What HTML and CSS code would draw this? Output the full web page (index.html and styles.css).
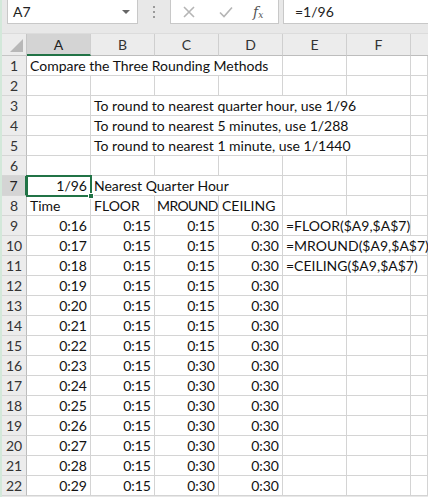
FILE: index.html
```html
<!DOCTYPE html>
<html>
<head>
<meta charset="utf-8">
<link rel="stylesheet" href="styles.css">
</head>
<body>
<div class="app">
  <div class="toolbar">
    <div class="namebox"><span>A7</span><span class="arrow"></span></div>
    <div class="dots"><i></i><i></i><i></i></div>
    <div class="fbuttons">
      <svg class="ic-x" width="12" height="12" viewBox="0 0 12 12"><path d="M1 1 L11 11 M11 1 L1 11" stroke="#b5b5b5" stroke-width="1.6" fill="none"/></svg>
      <svg class="ic-ok" width="14" height="12" viewBox="0 0 14 12"><path d="M1 6.5 L5 10.5 L13 1.5" stroke="#b5b5b5" stroke-width="1.6" fill="none"/></svg>
      <span class="fx">f<sub>x</sub></span>
    </div>
    <div class="fbar">=1/96</div>
  </div>
  <div class="sheet">
    <div class="row head">
      <div class="corner"><svg width="13" height="13" viewBox="0 0 13 13"><path d="M13 0 L13 13 L0 13 Z" fill="#b8b8b8"/></svg></div>
      <div class="ch sel">A</div><div class="ch">B</div><div class="ch">C</div><div class="ch">D</div><div class="ch">E</div><div class="ch">F</div><div class="ch last"></div>
    </div>
    <div class="row"><div class="rh">1</div><div class="c s4">Compare the Three Rounding Methods</div><div class="c"></div><div class="c"></div><div class="c"></div></div>
    <div class="row"><div class="rh">2</div><div class="c"></div><div class="c"></div><div class="c"></div><div class="c"></div><div class="c"></div><div class="c"></div><div class="c"></div></div>
    <div class="row"><div class="rh">3</div><div class="c"></div><div class="c s5">To round to nearest quarter hour, use 1/96</div><div class="c"></div></div>
    <div class="row"><div class="rh">4</div><div class="c"></div><div class="c s5">To round to nearest 5 minutes, use 1/288</div><div class="c"></div></div>
    <div class="row"><div class="rh">5</div><div class="c"></div><div class="c s5">To round to nearest 1 minute, use 1/1440</div><div class="c"></div></div>
    <div class="row"><div class="rh">6</div><div class="c"></div><div class="c"></div><div class="c"></div><div class="c"></div><div class="c"></div><div class="c"></div><div class="c"></div></div>
    <div class="row"><div class="rh sel">7</div><div class="c r active">1/96<span class="handle"></span></div><div class="c s3">Nearest Quarter Hour</div><div class="c"></div><div class="c"></div><div class="c"></div></div>
    <div class="row"><div class="rh">8</div><div class="c">Time</div><div class="c">FLOOR</div><div class="c tight">MROUND</div><div class="c">CEILING</div><div class="c"></div><div class="c"></div><div class="c"></div></div>
    <div class="row"><div class="rh">9</div><div class="c r">0:16</div><div class="c r">0:15</div><div class="c r">0:15</div><div class="c r">0:30</div><div class="c s2">=FLOOR($A9,$A$7)</div><div class="c"></div></div>
    <div class="row"><div class="rh">10</div><div class="c r">0:17</div><div class="c r">0:15</div><div class="c r">0:15</div><div class="c r">0:30</div><div class="c s3">=MROUND($A9,$A$7)</div></div>
    <div class="row"><div class="rh">11</div><div class="c r">0:18</div><div class="c r">0:15</div><div class="c r">0:15</div><div class="c r">0:30</div><div class="c s2">=CEILING($A9,$A$7)</div><div class="c"></div></div>
    <div class="row"><div class="rh">12</div><div class="c r">0:19</div><div class="c r">0:15</div><div class="c r">0:15</div><div class="c r">0:30</div><div class="c"></div><div class="c"></div><div class="c"></div></div>
    <div class="row"><div class="rh">13</div><div class="c r">0:20</div><div class="c r">0:15</div><div class="c r">0:15</div><div class="c r">0:30</div><div class="c"></div><div class="c"></div><div class="c"></div></div>
    <div class="row"><div class="rh">14</div><div class="c r">0:21</div><div class="c r">0:15</div><div class="c r">0:15</div><div class="c r">0:30</div><div class="c"></div><div class="c"></div><div class="c"></div></div>
    <div class="row"><div class="rh">15</div><div class="c r">0:22</div><div class="c r">0:15</div><div class="c r">0:15</div><div class="c r">0:30</div><div class="c"></div><div class="c"></div><div class="c"></div></div>
    <div class="row"><div class="rh">16</div><div class="c r">0:23</div><div class="c r">0:15</div><div class="c r">0:30</div><div class="c r">0:30</div><div class="c"></div><div class="c"></div><div class="c"></div></div>
    <div class="row"><div class="rh">17</div><div class="c r">0:24</div><div class="c r">0:15</div><div class="c r">0:30</div><div class="c r">0:30</div><div class="c"></div><div class="c"></div><div class="c"></div></div>
    <div class="row"><div class="rh">18</div><div class="c r">0:25</div><div class="c r">0:15</div><div class="c r">0:30</div><div class="c r">0:30</div><div class="c"></div><div class="c"></div><div class="c"></div></div>
    <div class="row"><div class="rh">19</div><div class="c r">0:26</div><div class="c r">0:15</div><div class="c r">0:30</div><div class="c r">0:30</div><div class="c"></div><div class="c"></div><div class="c"></div></div>
    <div class="row"><div class="rh">20</div><div class="c r">0:27</div><div class="c r">0:15</div><div class="c r">0:30</div><div class="c r">0:30</div><div class="c"></div><div class="c"></div><div class="c"></div></div>
    <div class="row"><div class="rh">21</div><div class="c r">0:28</div><div class="c r">0:15</div><div class="c r">0:30</div><div class="c r">0:30</div><div class="c"></div><div class="c"></div><div class="c"></div></div>
    <div class="row"><div class="rh">22</div><div class="c r">0:29</div><div class="c r">0:15</div><div class="c r">0:30</div><div class="c r">0:30</div><div class="c"></div><div class="c"></div><div class="c"></div></div>
  </div>
</div>
</body>
</html>
```

FILE: styles.css
```css
* { box-sizing: border-box; }
html, body { margin: 0; padding: 0; background: #ffffff; }
body { font-family: Lato, "Open Sans", sans-serif; color: #111; }
.app {
  width: 428px;
  height: 497px;
  overflow: hidden;
  border-left: 2px solid #d3e8da;
  background: #e8e8e8;
}
.toolbar {
  height: 33px;
  display: flex;
  align-items: flex-start;
  background: #e8e8e8;
  padding-left: 5px;
}
.namebox {
  width: 131px;
  height: 24px;
  background: #fff;
  border: 1px solid #c8c8c8;
  border-top: none;
  display: flex;
  align-items: center;
  justify-content: space-between;
  padding: 0 7px 0 5px;
  font-size: 14px;
  color: #222;
}
.arrow {
  width: 0; height: 0;
  border-left: 4px solid transparent;
  border-right: 4px solid transparent;
  border-top: 4px solid #666;
}
.dots {
  width: 32px;
  height: 24px;
  display: flex;
  flex-direction: column;
  align-items: center;
  justify-content: center;
  gap: 3px;
}
.dots i { display: block; width: 2px; height: 2px; background: #9a9a9a; }
.fbuttons {
  width: 109px;
  height: 24px;
  background: #fff;
  border: 1px solid #c8c8c8;
  border-top: none;
  display: flex;
  align-items: center;
  padding-left: 12px;
}
.ic-x { margin-right: 24px; }
.ic-ok { margin-right: 20px; }
.fx {
  font-family: "DejaVu Serif", "Liberation Serif", serif;
  font-style: italic;
  font-size: 14px;
  color: #555;
}
.fx sub { font-size: 9px; vertical-align: -1px; }
.fbar {
  flex: 1;
  margin-left: 4px;
  height: 24px;
  background: #fff;
  border: 1px solid #c8c8c8;
  border-top: none;
  border-right: none;
  font-size: 14px;
  color: #222;
  display: flex;
  align-items: center;
  padding-left: 11px;
}
.sheet { background: #fff; }
.row {
  display: grid;
  grid-template-columns: 25px repeat(6, 64px) 1fr;
  height: 20px;
}
.row.head {
  height: 23px;
  background: #ececec;
  border-top: 1px solid #dcdcdc;
}
.corner {
  display: flex;
  align-items: flex-end;
  justify-content: flex-end;
  padding: 0 3px 3px 0;
  border-right: 1px solid #c6c6c6;
  border-bottom: 1px solid #c6c6c6;
}
.corner svg { display: block; }
.ch {
  border-right: 1px solid #cfcfcf;
  border-bottom: 1px solid #bdbdbd;
  font-size: 14px;
  color: #333;
  display: flex;
  align-items: center;
  justify-content: center;
}
.ch.sel { background: #d4d4d4; border-bottom: 2px solid #217346; color: #222; }
.ch.last { border-right: none; }
.rh {
  background: #ececec;
  border-right: 1px solid #bdbdbd;
  border-bottom: 1px solid #d6d6d6;
  font-size: 14px;
  color: #333;
  display: flex;
  align-items: center;
  justify-content: center;
}
.rh.sel { background: #d4d4d4; border-right: 2px solid #217346; color: #222; }
.c {
  border-right: 1px solid #d4d4d4;
  border-bottom: 1px solid #d4d4d4;
  font-size: 14px;
  line-height: 19px;
  padding: 0 2px 0 3px;
  white-space: nowrap;
  overflow: visible;
  color: #111;
}
.c.r { text-align: right; padding-right: 3px; }
.c.tight { letter-spacing: -0.6px; padding-left: 2px; }
.s2 { grid-column: span 2; }
.s3 { grid-column: span 3; }
.s4 { grid-column: span 4; }
.s5 { grid-column: span 5; }
.active {
  position: relative;
  outline: 2px solid #217346;
  outline-offset: -1px;
  z-index: 1;
}
.handle {
  position: absolute;
  right: -4px;
  bottom: -4px;
  width: 6px;
  height: 6px;
  background: #217346;
  border: 1px solid #fff;
}
```
